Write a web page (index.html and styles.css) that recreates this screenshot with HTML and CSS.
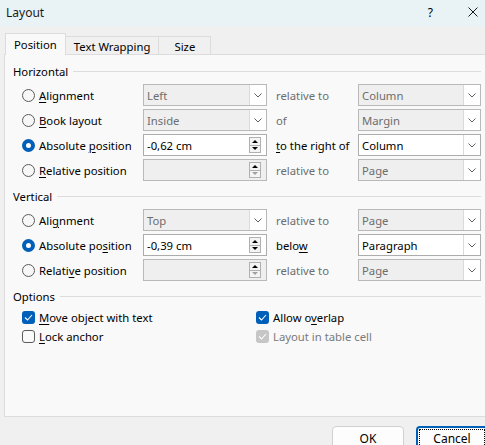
FILE: index.html
```html
<!DOCTYPE html>
<html lang="en">
<head>
    <meta charset="UTF-8">
    <title>Layout</title>
    <link rel="stylesheet" href="styles.css">
</head>
<body>
    <div class="dialog">
        <div class="titlebar">
            <span class="title">Layout</span>
            <span class="help">?</span>
            <svg class="close" width="10" height="10" viewBox="0 0 10 10">
                <path d="M0.5 0.5 L9.5 9.5 M9.5 0.5 L0.5 9.5" stroke="#1a1a1a" stroke-width="1" fill="none"/>
            </svg>
        </div>

        <div class="tabs">
            <div class="tab active">Position</div>
            <div class="tab">Text Wrapping</div>
            <div class="tab tab-size">Size</div>
        </div>

        <div class="panel">
            <!-- Horizontal -->
            <div class="group">
                <div class="group-title">Horizontal</div>
                <div class="row">
                    <div class="opt"><span class="radio"></span><span><u>A</u>lignment</span></div>
                    <div class="combo disabled"><span class="value">Left</span><span class="drop"><svg width="8" height="5" viewBox="0 0 8 5"><polyline points="0.5,0.5 4,4 7.5,0.5" fill="none" stroke="#5f5f5f" stroke-width="1"/></svg></span></div>
                    <span class="rel muted">relative to</span>
                    <div class="combo disabled wide"><span class="value">Column</span><span class="drop"><svg width="8" height="5" viewBox="0 0 8 5"><polyline points="0.5,0.5 4,4 7.5,0.5" fill="none" stroke="#5f5f5f" stroke-width="1"/></svg></span></div>
                </div>
                <div class="row">
                    <div class="opt"><span class="radio"></span><span><u>B</u>ook layout</span></div>
                    <div class="combo disabled"><span class="value">Inside</span><span class="drop"><svg width="8" height="5" viewBox="0 0 8 5"><polyline points="0.5,0.5 4,4 7.5,0.5" fill="none" stroke="#5f5f5f" stroke-width="1"/></svg></span></div>
                    <span class="rel muted">of</span>
                    <div class="combo disabled wide"><span class="value">Margin</span><span class="drop"><svg width="8" height="5" viewBox="0 0 8 5"><polyline points="0.5,0.5 4,4 7.5,0.5" fill="none" stroke="#5f5f5f" stroke-width="1"/></svg></span></div>
                </div>
                <div class="row">
                    <div class="opt"><span class="radio checked"></span><span>Absolute <u>p</u>osition</span></div>
                    <div class="combo"><span class="value">-0,62 cm</span><span class="spin"><i class="up"></i><i class="down"></i></span></div>
                    <span class="rel"><u>t</u>o the right of</span>
                    <div class="combo wide"><span class="value">Column</span><span class="drop"><svg width="8" height="5" viewBox="0 0 8 5"><polyline points="0.5,0.5 4,4 7.5,0.5" fill="none" stroke="#5f5f5f" stroke-width="1"/></svg></span></div>
                </div>
                <div class="row">
                    <div class="opt"><span class="radio"></span><span><u>R</u>elative position</span></div>
                    <div class="combo disabled"><span class="value"></span><span class="spin"><i class="up"></i><i class="down off"></i></span></div>
                    <span class="rel muted">relative to</span>
                    <div class="combo disabled wide"><span class="value">Page</span><span class="drop"><svg width="8" height="5" viewBox="0 0 8 5"><polyline points="0.5,0.5 4,4 7.5,0.5" fill="none" stroke="#5f5f5f" stroke-width="1"/></svg></span></div>
                </div>
            </div>

            <!-- Vertical -->
            <div class="group">
                <div class="group-title">Vertical</div>
                <div class="row">
                    <div class="opt"><span class="radio"></span><span>Ali<u>g</u>nment</span></div>
                    <div class="combo disabled"><span class="value">Top</span><span class="drop"><svg width="8" height="5" viewBox="0 0 8 5"><polyline points="0.5,0.5 4,4 7.5,0.5" fill="none" stroke="#5f5f5f" stroke-width="1"/></svg></span></div>
                    <span class="rel muted">relative to</span>
                    <div class="combo disabled wide"><span class="value">Page</span><span class="drop"><svg width="8" height="5" viewBox="0 0 8 5"><polyline points="0.5,0.5 4,4 7.5,0.5" fill="none" stroke="#5f5f5f" stroke-width="1"/></svg></span></div>
                </div>
                <div class="row">
                    <div class="opt"><span class="radio checked"></span><span>Absolute po<u>s</u>ition</span></div>
                    <div class="combo"><span class="value">-0,39 cm</span><span class="spin"><i class="up"></i><i class="down"></i></span></div>
                    <span class="rel">belo<u>w</u></span>
                    <div class="combo wide"><span class="value">Paragraph</span><span class="drop"><svg width="8" height="5" viewBox="0 0 8 5"><polyline points="0.5,0.5 4,4 7.5,0.5" fill="none" stroke="#5f5f5f" stroke-width="1"/></svg></span></div>
                </div>
                <div class="row">
                    <div class="opt"><span class="radio"></span><span>Relati<u>v</u>e position</span></div>
                    <div class="combo disabled"><span class="value"></span><span class="spin"><i class="up"></i><i class="down off"></i></span></div>
                    <span class="rel muted">relative to</span>
                    <div class="combo disabled wide"><span class="value">Page</span><span class="drop"><svg width="8" height="5" viewBox="0 0 8 5"><polyline points="0.5,0.5 4,4 7.5,0.5" fill="none" stroke="#5f5f5f" stroke-width="1"/></svg></span></div>
                </div>
            </div>

            <!-- Options -->
            <div class="group">
                <div class="group-title options-title">Options</div>
                <div class="checks">
                    <div class="check-item">
                        <span class="checkbox checked"><svg width="9" height="7" viewBox="0 0 9 7"><polyline points="1,3.5 3.5,6 8,1" fill="none" stroke="#fff" stroke-width="1.1"/></svg></span>
                        <span><u>M</u>ove object with text</span>
                    </div>
                    <div class="check-item">
                        <span class="checkbox checked"><svg width="9" height="7" viewBox="0 0 9 7"><polyline points="1,3.5 3.5,6 8,1" fill="none" stroke="#fff" stroke-width="1.1"/></svg></span>
                        <span>Allow o<u>v</u>erlap</span>
                    </div>
                    <div class="check-item">
                        <span class="checkbox"></span>
                        <span><u>L</u>ock anchor</span>
                    </div>
                    <div class="check-item faded">
                        <span class="checkbox checked off"><svg width="9" height="7" viewBox="0 0 9 7"><polyline points="1,3.5 3.5,6 8,1" fill="none" stroke="#fff" stroke-width="1.1"/></svg></span>
                        <span>Layout in table cell</span>
                    </div>
                </div>
            </div>
        </div>

        <div class="footer">
            <button class="btn">OK</button>
            <button class="btn focused">Cancel</button>
        </div>
    </div>
</body>
</html>
```

FILE: styles.css
```css
:root {
    --face: #f0f0f0;
    --panel: #f9f9f9;
    --line: #dcdcdc;
    --field-border: #acacac;
    --accent: #005fb8;
    --muted: #6d6d6d;
}

* {
    margin: 0;
    padding: 0;
    box-sizing: border-box;
}

body {
    font-family: "Noto Sans", "Open Sans", sans-serif;
    font-size: 11.3px;
    color: #000;
    background: var(--face);
}

u {
    text-decoration-thickness: 1px;
    text-underline-offset: 2px;
}

.dialog {
    width: 485px;
    height: 445px;
    overflow: hidden;
    background: var(--face);
}

/* title bar */
.titlebar {
    height: 26px;
    display: flex;
    align-items: center;
    padding: 0 7px 2px 6px;
    background: #e9f3f6;
}

.title {
    font-size: 12px;
    color: #1a1a1a;
}

.help {
    margin-left: auto;
    font-size: 12px;
    margin-right: 35px;
}

/* tabs */
.tabs {
    display: flex;
    align-items: flex-end;
    height: 21px;
    margin-top: 7px;
    padding-left: 5px;
    position: relative;
    z-index: 1;
}

.tab {
    height: 18px;
    line-height: 19px;
    padding: 0 8px;
    border: 1px solid var(--line);
    border-bottom: none;
    border-left: none;
    background: var(--face);
}

.tab.active {
    height: 22px;
    margin-bottom: -1px;
    line-height: 22px;
    border-left: 1px solid var(--line);
    background: var(--panel);
}

.tab-size {
    width: 52px;
    text-align: center;
}

/* panel */
.panel {
    width: 490px;
    height: 363px;
    margin-left: 4px;
    padding: 8px 0 0 8px;
    border: 1px solid var(--line);
    background: var(--panel);
}

.group {
    width: 468px;
}

.group + .group {
    margin-top: 7px;
}

.group-title {
    display: flex;
    align-items: center;
    height: 16px;
    margin-bottom: 5px;
}

.group-title::after {
    content: "";
    flex: 1;
    height: 1px;
    margin-left: 5px;
    background: var(--line);
}

.options-title {
    margin-bottom: 4px;
}

.row {
    display: flex;
    align-items: center;
    height: 22px;
    padding-left: 9px;
}

.row + .row {
    margin-top: 3px;
}

.opt {
    width: 121px;
    display: flex;
    align-items: center;
    gap: 4px;
}

.radio {
    width: 13px;
    height: 13px;
    border-radius: 50%;
    border: 1px solid #5b5b5b;
    background: #f7f7f7;
    flex-shrink: 0;
}

.radio.checked {
    border: 4px solid var(--accent);
    background: #fff;
}

/* fields */
.combo {
    width: 124px;
    height: 22px;
    display: flex;
    align-items: center;
    border: 1px solid var(--field-border);
    background: #fff;
}

.combo.wide {
    width: 123px;
}

.combo.disabled {
    background: #efefef;
    border-color: #b9b9b9;
}

.combo .value {
    flex: 1;
    padding-left: 3px;
    white-space: nowrap;
}

.combo.disabled .value {
    color: var(--muted);
}

.drop {
    width: 17px;
    height: 20px;
    display: flex;
    align-items: center;
    justify-content: center;
    border-left: 1px solid #dadada;
    background: #fff;
}

.spin {
    width: 12px;
    height: 16px;
    margin-right: 5px;
    display: flex;
    flex-direction: column;
    border: 1px solid #b0b0b0;
    background: #f4f4f4;
}

.spin i {
    flex: 1;
    display: flex;
    align-items: center;
    justify-content: center;
}

.spin i + i {
    border-top: 1px solid #b0b0b0;
}

.spin i::before {
    content: "";
    border-left: 3px solid transparent;
    border-right: 3px solid transparent;
}

.spin .up::before {
    border-bottom: 3px solid #000;
}

.spin .down::before {
    border-top: 3px solid #000;
}

.spin .down.off::before {
    border-top-color: #a0a0a0;
}

.rel {
    width: 91px;
    padding-left: 9px;
    white-space: nowrap;
}

.muted {
    color: var(--muted);
}

/* options */
.checks {
    display: grid;
    grid-template-columns: 234px 1fr;
    grid-auto-rows: 19px;
    padding-left: 9px;
}

.check-item {
    display: flex;
    align-items: center;
    gap: 4px;
}

.checkbox {
    width: 13px;
    height: 13px;
    border-radius: 3px;
    border: 1px solid #5b5b5b;
    background: #fafafa;
    display: flex;
    align-items: center;
    justify-content: center;
    flex-shrink: 0;
}

.checkbox.checked {
    border: none;
    background: var(--accent);
}

.checkbox.checked.off {
    background: #c6c6c6;
}

.faded {
    color: #7a7a7a;
}

/* buttons */
.footer {
    display: flex;
    gap: 12px;
    padding: 9px 0 0 332px;
}

.btn {
    width: 72px;
    height: 24px;
    flex-shrink: 0;
    font-family: inherit;
    font-size: 12px;
    color: #000;
    border: 1px solid #d0d0d0;
    border-radius: 4px;
    background: #fdfdfd;
}

.btn.focused {
    border: 2px solid var(--accent);
    outline: 1px dotted #000;
    outline-offset: -4px;
}
```
